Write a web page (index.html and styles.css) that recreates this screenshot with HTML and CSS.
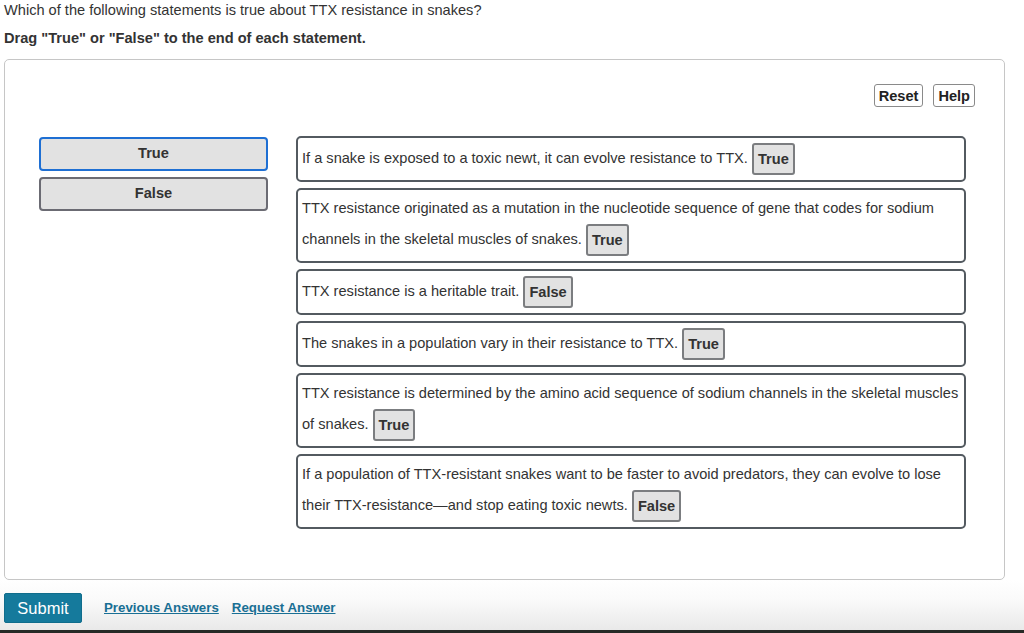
FILE: index.html
```html
<!DOCTYPE html>
<html>
<head>
<meta charset="utf-8">
<link rel="stylesheet" href="styles.css">
</head>
<body>
<div class="page">
  <p class="question">Which of the following statements is true about TTX resistance in snakes?</p>
  <p class="instruction">Drag "True" or "False" to the end of each statement.</p>
  <div class="panel">
    <div class="toolbar">
      <button class="tool-btn">Reset</button>
      <button class="tool-btn">Help</button>
    </div>
    <div class="workspace">
      <div class="bank">
        <div class="bank-item selected">True</div>
        <div class="bank-item">False</div>
      </div>
      <div class="statements">
        <div class="statement">If a snake is exposed to a toxic newt, it can evolve resistance to TTX. <span class="chip">True</span></div>
        <div class="statement">TTX resistance originated as a mutation in the nucleotide sequence of gene that codes for sodium channels in the skeletal muscles of snakes. <span class="chip">True</span></div>
        <div class="statement">TTX resistance is a heritable trait. <span class="chip">False</span></div>
        <div class="statement">The snakes in a population vary in their resistance to TTX. <span class="chip">True</span></div>
        <div class="statement">TTX resistance is determined by the amino acid sequence of sodium channels in the skeletal muscles of snakes. <span class="chip">True</span></div>
        <div class="statement">If a population of TTX-resistant snakes want to be faster to avoid predators, they can evolve to lose their TTX-resistance—and stop eating toxic newts. <span class="chip">False</span></div>
      </div>
    </div>
  </div>
  <div class="footer">
    <button class="submit">Submit</button>
    <a class="link" href="#">Previous Answers</a>
    <a class="link" href="#">Request Answer</a>
  </div>
  <div class="bottom-edge"></div>
</div>
</body>
</html>
```

FILE: styles.css
```css
html, body {
  margin: 0;
  padding: 0;
  background: #fff;
}
body {
  font-family: "Liberation Sans", Arial, Helvetica, sans-serif;
  color: #333;
  font-size: 14.6px;
  width: 1024px;
  height: 633px;
  overflow: hidden;
}
.page {
  display: flex;
  flex-direction: column;
  height: 633px;
}
.question {
  margin: 1px 0 0 4px;
  font-size: 14.6px;
  line-height: 18px;
}
.instruction {
  margin: 10px 0 0 4px;
  font-weight: bold;
  font-size: 14.6px;
  line-height: 18px;
}
.panel {
  margin: 12px 0 0 4px;
  width: 1001px;
  height: 521px;
  border: 1px solid #c6c6c6;
  border-radius: 5px;
  box-sizing: border-box;
  padding: 24px 29px 0 34px;
  flex: none;
}
.toolbar {
  display: flex;
  justify-content: flex-end;
  gap: 10px;
}
.tool-btn {
  font-family: "Liberation Sans", Arial, sans-serif;
  font-weight: bold;
  font-size: 14.6px;
  color: #222;
  background: #fff;
  border: 1px solid #8a8a8a;
  border-radius: 3px;
  height: 23px;
  padding: 0 4px;
  line-height: 20px;
}
.workspace {
  display: flex;
  gap: 28px;
  margin-top: 29px;
  padding-right: 9px;
}
.bank {
  width: 229px;
  display: flex;
  flex-direction: column;
  gap: 6px;
  flex: none;
  padding-top: 1px;
}
.bank-item {
  height: 34px;
  box-sizing: border-box;
  background: #e2e2e2;
  border: 2px solid #6b6b73;
  border-radius: 4px;
  text-align: center;
  font-weight: bold;
  font-size: 14.6px;
  line-height: 28px;
  color: #333;
}
.bank-item.selected {
  border-color: #1e6fd3;
}
.statements {
  flex: 1;
  display: flex;
  flex-direction: column;
  gap: 6px;
}
.statement {
  border: 2px solid #535a60;
  border-radius: 5px;
  padding: 4px 2px 4px 4px;
  font-size: 14.6px;
  line-height: 29px;
  color: #333;
}
.chip {
  display: inline-block;
  vertical-align: middle;
  box-sizing: border-box;
  height: 32px;
  margin: 1px 0;
  line-height: 28px;
  padding: 0 4px;
  background: #e2e2e2;
  border: 2px solid #7b7d80;
  border-radius: 3px;
  font-weight: bold;
  color: #333;
}
.footer {
  flex: 1;
  display: flex;
  align-items: flex-start;
  padding: 13px 0 0 4px;
  background: linear-gradient(#fff 0%, #fafafa 40%, #e9e9e9 100%);
}
.submit {
  width: 78px;
  height: 30px;
  background: #157a9c;
  color: #fff;
  border: 1px solid #106d8c;
  border-radius: 2px;
  font-family: "Liberation Sans", Arial, sans-serif;
  font-size: 16.5px;
  padding: 0;
}
.link {
  font-weight: bold;
  font-size: 13.3px;
  color: #196f94;
  text-decoration: underline;
  margin-top: 7px;
  margin-left: 13px;
}
.link:first-of-type {
  margin-left: 22px;
}
.bottom-edge {
  height: 3px;
  background: #262a26;
  flex: none;
}
```
